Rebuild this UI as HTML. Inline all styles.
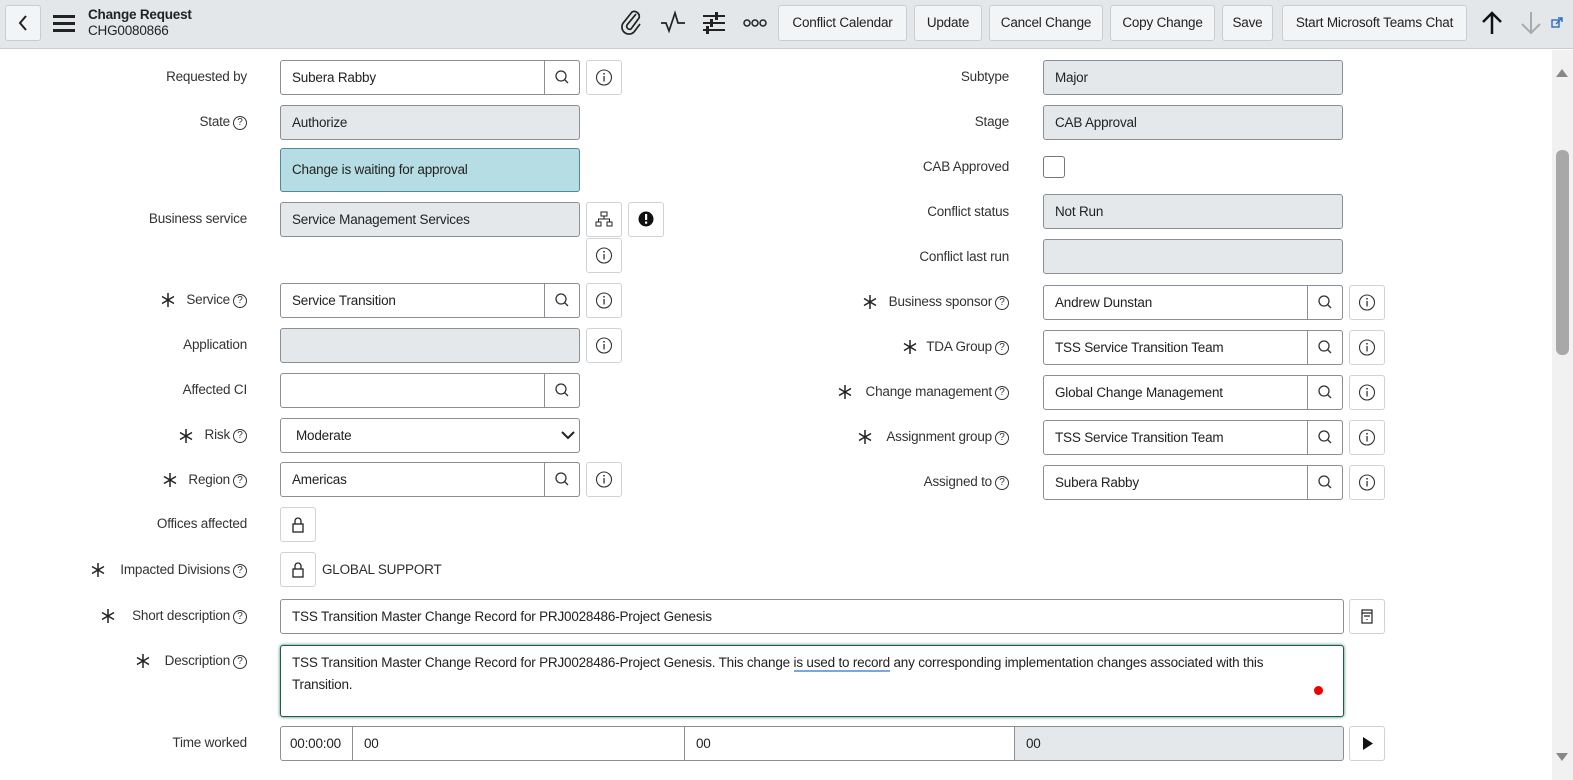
<!DOCTYPE html>
<html><head><meta charset="utf-8"><style>
*{box-sizing:border-box}
body{margin:0;width:1573px;height:780px;overflow:hidden;background:#fff;font-family:"Liberation Sans Narrow","Liberation Sans",sans-serif;font-size:13.5px;letter-spacing:-0.2px;color:#2e2e2e;position:relative}
.a{position:absolute}
.hdr{left:0;top:0;width:1573px;height:49px;background:#e4e7ea;border-bottom:1px solid #c9cdd1}
.btn{position:absolute;top:5px;height:36px;border:1px solid #c9ccd0;border-radius:3px;background:#f3f4f5;font-size:13.5px;line-height:34px;text-align:center;color:#222;white-space:nowrap}
.lbl{position:absolute;text-align:right;color:#333;line-height:20px}
.inp{position:absolute;height:35px;border:1px solid #8a8f95;border-radius:3px;background:#fff;padding-left:11px;line-height:33px;color:#222}
.ro{background:#e5e8eb}
.sb{position:absolute;width:36px;height:35px;border:1px solid #8a8f95;border-radius:0 3px 3px 0;background:#fff}
.ib{position:absolute;width:36px;height:35px;border:1px solid #cfd2d6;border-radius:3px;background:#fff}
.q{display:inline-block;width:14px;height:14px;border:1px solid #333;border-radius:50%;font-size:10px;line-height:12px;text-align:center;vertical-align:1px;margin-left:3px;letter-spacing:0}
.st{position:absolute;width:16px;height:16px}
svg{position:absolute}
</style></head><body>
<div class="a hdr"></div>
<div class="btn" style="left:5px;width:36px"><svg width="34" height="34" viewBox="0 0 34 34" style="left:0;top:0"><path d="M20 10 L14 17 L20 24" fill="none" stroke="#222" stroke-width="2"/></svg></div>
<svg width="24" height="20" style="left:52px;top:13px"><rect x="1" y="2" width="22" height="3" fill="#222"/><rect x="1" y="9" width="22" height="3" fill="#222"/><rect x="1" y="16" width="22" height="3" fill="#222"/></svg>
<div class="a" style="left:88px;top:6px;font-weight:bold;color:#222;line-height:17px">Change Request</div>
<div class="a" style="left:88px;top:22px;color:#222;line-height:17px">CHG0080866</div>
<svg width="24" height="26" style="left:619px;top:9px"><path d="M17 5 L8 16 a3 3 0 0 0 4 4 L20 9 a5 5 0 0 0 -7 -6 L5 13 a7 7 0 0 0 10 10 L21 15" fill="none" stroke="#222" stroke-width="1.7"/></svg>
<svg width="26" height="24" style="left:660px;top:10px"><path d="M1 13 L6 13 L9 21 L15 3 L18 13 L25 13" fill="none" stroke="#222" stroke-width="1.7"/></svg>
<svg width="26" height="26" style="left:701px;top:10px"><path d="M2 6H24M2 13H24M2 20H24" stroke="#222" stroke-width="2"/><rect x="14" y="2" width="3" height="8" fill="#222"/><rect x="9" y="9" width="3" height="8" fill="#222"/><rect x="5" y="16" width="3" height="8" fill="#222"/></svg>
<svg width="24" height="10" style="left:743px;top:18px"><circle cx="4" cy="5" r="3" fill="none" stroke="#222" stroke-width="1.5"/><circle cx="12" cy="5" r="3" fill="none" stroke="#222" stroke-width="1.5"/><circle cx="20" cy="5" r="3" fill="none" stroke="#222" stroke-width="1.5"/></svg>
<div class="btn" style="left:778px;width:129px">Conflict Calendar</div>
<div class="btn" style="left:914px;width:68px">Update</div>
<div class="btn" style="left:989px;width:114px">Cancel Change</div>
<div class="btn" style="left:1110px;width:105px">Copy Change</div>
<div class="btn" style="left:1222px;width:51px">Save</div>
<div class="btn" style="left:1282px;width:185px">Start Microsoft Teams Chat</div>
<svg width="24" height="26" style="left:1480px;top:10px"><path d="M12 24V3M3 12L12 3L21 12" fill="none" stroke="#111" stroke-width="2.5"/></svg>
<svg width="24" height="26" style="left:1519px;top:10px"><path d="M12 2V23M3 14L12 23L21 14" fill="none" stroke="#aaa" stroke-width="2"/></svg>
<svg width="12" height="12" style="left:1551px;top:17px"><rect x="1" y="3" width="7" height="7" fill="none" stroke="#2a6ebd" stroke-width="1.4"/><path d="M5 7L11 1M7 1H11V5" fill="none" stroke="#2a6ebd" stroke-width="1.4"/></svg>

<div class="a" style="left:1552px;top:50px;width:21px;height:730px;background:#f1f1f1"></div>
<div class="a" style="left:1556px;top:150px;width:13px;height:205px;background:#a8a8a8;border-radius:6px"></div>
<svg width="14" height="10" style="left:1555px;top:68px"><path d="M1 9L7 1L13 9Z" fill="#888"/></svg>
<svg width="14" height="10" style="left:1555px;top:752px"><path d="M1 1L7 9L13 1Z" fill="#888"/></svg>

<div class="lbl" style="right:1326px;top:67px">Requested by</div>
<div class="inp" style="left:280px;top:60px;width:300px">Subera Rabby</div>
<div class="sb" style="left:544px;top:60px"></div>
<div class="ib" style="left:586px;top:60px"></div>

<div class="lbl" style="right:1326px;top:112px">State<span class="q">?</span></div>
<div class="inp ro" style="left:280px;top:105px;width:300px">Authorize</div>

<div class="inp" style="left:280px;top:148px;width:300px;height:44px;line-height:42px;background:#b7dde4;border-color:#4f8b97">Change is waiting for approval</div>

<div class="lbl" style="right:1326px;top:209px">Business service</div>
<div class="inp ro" style="left:280px;top:202px;width:300px">Service Management Services</div>
<div class="ib" style="left:586px;top:202px"><svg width="34" height="33" style="left:0;top:0"><rect x="14" y="9" width="6" height="4" fill="none" stroke="#222"/><rect x="9" y="19" width="5" height="4" fill="none" stroke="#222"/><rect x="20" y="19" width="5" height="4" fill="none" stroke="#222"/><path d="M17 13V16M11.5 19V16H22.5V19" fill="none" stroke="#222"/></svg></div>
<div class="ib" style="left:628px;top:202px"><svg width="34" height="33" style="left:0;top:0"><circle cx="17" cy="16" r="7.5" fill="#111"/><rect x="16" y="11" width="2.2" height="6" fill="#fff"/><rect x="16" y="18.5" width="2.2" height="2.2" fill="#fff"/></svg></div>
<div class="ib" style="left:586px;top:238px"></div>

<div class="st" style="left:160px;top:292px"></div>
<div class="lbl" style="right:1326px;top:290px">Service<span class="q">?</span></div>
<div class="inp" style="left:280px;top:283px;width:300px">Service Transition</div>
<div class="sb" style="left:544px;top:283px"></div>
<div class="ib" style="left:586px;top:283px"></div>

<div class="lbl" style="right:1326px;top:335px">Application</div>
<div class="inp ro" style="left:280px;top:328px;width:300px"></div>
<div class="ib" style="left:586px;top:328px"></div>

<div class="lbl" style="right:1326px;top:380px">Affected CI</div>
<div class="inp" style="left:280px;top:373px;width:300px"></div>
<div class="sb" style="left:544px;top:373px"></div>

<div class="st" style="left:178px;top:428px"></div>
<div class="lbl" style="right:1326px;top:425px">Risk<span class="q">?</span></div>
<div class="inp" style="left:280px;top:418px;width:300px;padding-left:15px">Moderate</div>
<svg width="14" height="10" style="left:561px;top:430px"><path d="M1 2L7 8L13 2" fill="none" stroke="#222" stroke-width="2"/></svg>

<div class="st" style="left:162px;top:472px"></div>
<div class="lbl" style="right:1326px;top:470px">Region<span class="q">?</span></div>
<div class="inp" style="left:280px;top:462px;width:300px">Americas</div>
<div class="sb" style="left:544px;top:462px"></div>
<div class="ib" style="left:586px;top:462px"></div>

<div class="lbl" style="right:1326px;top:514px">Offices affected</div>
<div class="ib" style="left:280px;top:507px"><svg width="34" height="33" style="left:0;top:0"><rect x="12" y="16" width="10" height="8" fill="none" stroke="#222" stroke-width="1.3"/><path d="M14 16V13a3 3 0 0 1 6 0V16" fill="none" stroke="#222" stroke-width="1.3"/></svg></div>

<div class="st" style="left:90px;top:562px"></div>
<div class="lbl" style="right:1326px;top:560px">Impacted Divisions<span class="q">?</span></div>
<div class="ib" style="left:280px;top:552px"><svg width="34" height="33" style="left:0;top:0"><rect x="12" y="16" width="10" height="8" fill="none" stroke="#222" stroke-width="1.3"/><path d="M14 16V13a3 3 0 0 1 6 0V16" fill="none" stroke="#222" stroke-width="1.3"/></svg></div>
<div class="a" style="left:322px;top:560px;line-height:20px">GLOBAL SUPPORT</div>

<div class="st" style="left:100px;top:608px"></div>
<div class="lbl" style="right:1326px;top:606px">Short description<span class="q">?</span></div>
<div class="inp" style="left:280px;top:599px;width:1064px">TSS Transition Master Change Record for PRJ0028486-Project Genesis</div>
<div class="ib" style="left:1349px;top:599px"><svg width="34" height="33" style="left:0;top:0"><rect x="12" y="10" width="10" height="13" fill="none" stroke="#222" stroke-width="1.2"/><path d="M12 13H22M14 16H20M17 19V20" stroke="#222" stroke-width="1.2"/></svg></div>

<div class="st" style="left:135px;top:653px"></div>
<div class="lbl" style="right:1326px;top:651px">Description<span class="q">?</span></div>
<div class="inp" style="left:280px;top:645px;width:1064px;height:72px;border-color:#1f5a4e;box-shadow:0 0 3px #3c7a6e;line-height:22px;padding-top:6px;padding-right:40px">TSS Transition Master Change Record for PRJ0028486-Project Genesis. This change <span style="border-bottom:2px solid #7aa7e0">is used to record</span> any corresponding implementation changes associated with this Transition.</div>
<div class="a" style="left:1314px;top:686px;width:9px;height:9px;border-radius:50%;background:#e00"></div>

<div class="lbl" style="right:1326px;top:733px">Time worked</div>
<div class="inp" style="left:280px;top:726px;width:73px;border-radius:3px 0 0 3px;padding-left:9px">00:00:00</div>
<div class="inp" style="left:352px;top:726px;width:333px;border-radius:0">00</div>
<div class="inp" style="left:684px;top:726px;width:331px;border-radius:0">00</div>
<div class="inp ro" style="left:1014px;top:726px;width:330px;border-radius:0 3px 3px 0">00</div>
<div class="ib" style="left:1349px;top:726px"><svg width="34" height="33" style="left:0;top:0"><path d="M13 10L23 16.5L13 23Z" fill="#111"/></svg></div>

<div class="lbl" style="right:564px;top:67px">Subtype</div>
<div class="inp ro" style="left:1043px;top:60px;width:300px">Major</div>
<div class="lbl" style="right:564px;top:112px">Stage</div>
<div class="inp ro" style="left:1043px;top:105px;width:300px">CAB Approval</div>
<div class="lbl" style="right:564px;top:157px">CAB Approved</div>
<div class="a" style="left:1043px;top:156px;width:22px;height:22px;border:1px solid #777;border-radius:3px"></div>
<div class="lbl" style="right:564px;top:202px">Conflict status</div>
<div class="inp ro" style="left:1043px;top:194px;width:300px">Not Run</div>
<div class="lbl" style="right:564px;top:247px">Conflict last run</div>
<div class="inp ro" style="left:1043px;top:239px;width:300px"></div>

<div class="st" style="left:862px;top:294px"></div>
<div class="lbl" style="right:564px;top:292px">Business sponsor<span class="q">?</span></div>
<div class="inp" style="left:1043px;top:285px;width:300px">Andrew Dunstan</div>
<div class="sb" style="left:1307px;top:285px"></div><div class="ib" style="left:1349px;top:285px"></div>

<div class="st" style="left:902px;top:339px"></div>
<div class="lbl" style="right:564px;top:337px">TDA Group<span class="q">?</span></div>
<div class="inp" style="left:1043px;top:330px;width:300px">TSS Service Transition Team</div>
<div class="sb" style="left:1307px;top:330px"></div><div class="ib" style="left:1349px;top:330px"></div>

<div class="st" style="left:837px;top:384px"></div>
<div class="lbl" style="right:564px;top:382px">Change management<span class="q">?</span></div>
<div class="inp" style="left:1043px;top:375px;width:300px">Global Change Management</div>
<div class="sb" style="left:1307px;top:375px"></div><div class="ib" style="left:1349px;top:375px"></div>

<div class="st" style="left:857px;top:429px"></div>
<div class="lbl" style="right:564px;top:427px">Assignment group<span class="q">?</span></div>
<div class="inp" style="left:1043px;top:420px;width:300px">TSS Service Transition Team</div>
<div class="sb" style="left:1307px;top:420px"></div><div class="ib" style="left:1349px;top:420px"></div>

<div class="lbl" style="right:564px;top:472px">Assigned to<span class="q">?</span></div>
<div class="inp" style="left:1043px;top:465px;width:300px">Subera Rabby</div>
<div class="sb" style="left:1307px;top:465px"></div><div class="ib" style="left:1349px;top:465px"></div>

<script>
document.querySelectorAll('.sb').forEach(function(e){e.innerHTML='<svg width="34" height="33" style="left:0;top:0"><circle cx="16" cy="15" r="5" fill="none" stroke="#333" stroke-width="1.3"/><path d="M19.5 18.5L23 22" stroke="#333" stroke-width="1.3"/></svg>';});
document.querySelectorAll('.ib').forEach(function(e){if(!e.innerHTML)e.innerHTML='<svg width="34" height="33" style="left:0;top:0"><circle cx="17" cy="16.5" r="7.5" fill="none" stroke="#333" stroke-width="1.1"/><rect x="16.4" y="15" width="1.3" height="5.5" fill="#333"/><circle cx="17" cy="12.8" r="0.9" fill="#333"/></svg>';});
document.querySelectorAll('.st').forEach(function(e){e.innerHTML='<svg width="16" height="16" style="left:0;top:0"><path d="M8 1V15M2 4.5L14 11.5M2 11.5L14 4.5" stroke="#222" stroke-width="1.5"/></svg>';});
</script>
</body></html>
